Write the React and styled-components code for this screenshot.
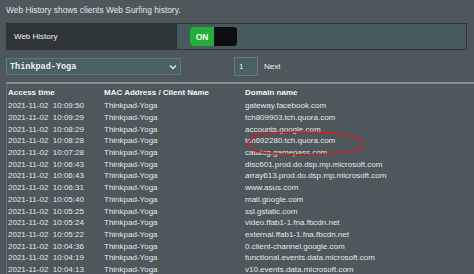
import React from 'react';
import styled, { createGlobalStyle } from 'styled-components';

const GlobalStyle = createGlobalStyle`
  html, body {
    margin: 0;
    padding: 0;
    background: #4e575b;
  }
  body {
    font-family: "Liberation Sans", Arial, sans-serif;
    color: #e6e9ea;
  }
`;

const Page = styled.div`
  width: 474px;
  height: 274px;
  overflow: hidden;
  padding-left: 6px;
  box-sizing: border-box;
  background: #4e575b;
`;

const Intro = styled.p`
  margin: 0;
  padding-top: 5px;
  height: 18px;
  font-size: 8.4px;
  line-height: 10px;
  color: #e2e6e7;
`;

const SettingRow = styled.div`
  display: flex;
  width: 461px;
  height: 27px;
  box-sizing: border-box;
  border: 1px solid #2f373a;
`;

const SettingLabel = styled.div`
  width: 163px;
  background: #2e3538;
  display: flex;
  align-items: center;
  padding-left: 7px;
  font-size: 8px;
  color: #eef0f0;
`;

const SettingValue = styled.div`
  flex: 1;
  background: #475a5e;
  display: flex;
  align-items: center;
  padding-left: 13px;
`;

const Toggle = styled.div`
  display: flex;
  width: 47px;
  height: 19px;
  border-radius: 3px;
  overflow: hidden;
  background: #0c0e0f;
`;

const ToggleOn = styled.span`
  width: 24px;
  background: #25ad3b;
  color: #f2fff2;
  font-size: 8.5px;
  font-weight: bold;
  display: flex;
  align-items: center;
  justify-content: center;
`;

const Controls = styled.div`
  display: flex;
  align-items: center;
  margin-top: 7px;
  height: 19px;
`;

const Select = styled.div`
  width: 175px;
  height: 17px;
  box-sizing: border-box;
  border: 1px solid #63777b;
  background: #4b6064;
  display: flex;
  align-items: center;
  justify-content: space-between;
  padding: 0 3px 0 3px;
  font-family: "Liberation Mono", monospace;
  font-weight: bold;
  font-size: 8.5px;
  color: #eef2f2;
`;

const PageInput = styled.div`
  width: 24px;
  height: 19px;
  box-sizing: border-box;
  margin-left: 53px;
  border: 1px solid #687c80;
  background: #4b6064;
  display: flex;
  align-items: center;
  padding-left: 4px;
  font-size: 8px;
  color: #eef2f2;
`;

const NextLabel = styled.span`
  margin-left: 6px;
  font-size: 8px;
  color: #eef0f0;
`;

const Table = styled.div`
  position: relative;
  margin-top: 6px;
  border-top: 2px solid #859094;
  border-left: 1px solid #687376;
  padding-left: 1px;
`;

const Row = styled.div`
  display: grid;
  grid-template-columns: 96px 141px 1fr;
  height: ${p => (p.$head ? '16px' : '11.7px')};
  align-items: center;
  font-size: 8px;
  font-weight: ${p => (p.$head ? 'bold' : 'normal')};
  color: ${p => (p.$head ? '#f4f6f6' : '#e3e7e8')};
  white-space: nowrap;
`;

const Mark = styled.svg`
  position: absolute;
  left: 234px;
  top: 46px;
  pointer-events: none;
`;

const rows = [
  ['10:09:50', 'gateway.facebook.com'],
  ['10:09:29', 'tch809903.tch.quora.com'],
  ['10:08:29', 'accounts.google.com'],
  ['10:08:28', 'tch692280.tch.quora.com'],
  ['10:07:28', 'catalog.gamepass.com'],
  ['10:06:43', 'disc601.prod.do.dsp.mp.microsoft.com'],
  ['10:06:43', 'array613.prod.do.dsp.mp.microsoft.com'],
  ['10:06:31', 'www.asus.com'],
  ['10:05:40', 'mail.google.com'],
  ['10:05:25', 'ssl.gstatic.com'],
  ['10:05:24', 'video.ffab1-1.fna.fbcdn.net'],
  ['10:05:22', 'external.ffab1-1.fna.fbcdn.net'],
  ['10:04:36', '0.client-channel.google.com'],
  ['10:04:19', 'functional.events.data.microsoft.com'],
  ['10:04:13', 'v10.events.data.microsoft.com'],
];

const Chevron = () => (
  <svg width="8" height="6" viewBox="0 0 8 6">
    <path d="M1 1.5 L4 4.5 L7 1.5" fill="none" stroke="#e8eeee" strokeWidth="1.4" />
  </svg>
);

const App = () => (
  <Page>
    <GlobalStyle />
    <Intro>Web History shows clients Web Surfing history.</Intro>
    <SettingRow>
      <SettingLabel>Web History</SettingLabel>
      <SettingValue>
        <Toggle>
          <ToggleOn>ON</ToggleOn>
        </Toggle>
      </SettingValue>
    </SettingRow>
    <Controls>
      <Select>
        <span>Thinkpad-Yoga</span>
        <Chevron />
      </Select>
      <PageInput>1</PageInput>
      <NextLabel>Next</NextLabel>
    </Controls>
    <Table>
      <Row $head>
        <span>Access time</span>
        <span>MAC Address / Client Name</span>
        <span>Domain name</span>
      </Row>
      {rows.map(([time, domain], i) => (
        <Row key={i}>
          <span>2021-11-02&nbsp;&nbsp;{time}</span>
          <span>Thinkpad-Yoga</span>
          <span>{domain}</span>
        </Row>
      ))}
      <Mark width="130" height="30" viewBox="0 0 130 30">
        <path
          d="M10 6 C 30 1, 95 0, 116 8 C 128 13, 122 21, 100 23 C 70 26, 25 25, 12 20 C 4 16, 6 11, 14 7"
          fill="none"
          stroke="#b9272c"
          strokeWidth="1.6"
        />
      </Mark>
    </Table>
  </Page>
);

export default App;
